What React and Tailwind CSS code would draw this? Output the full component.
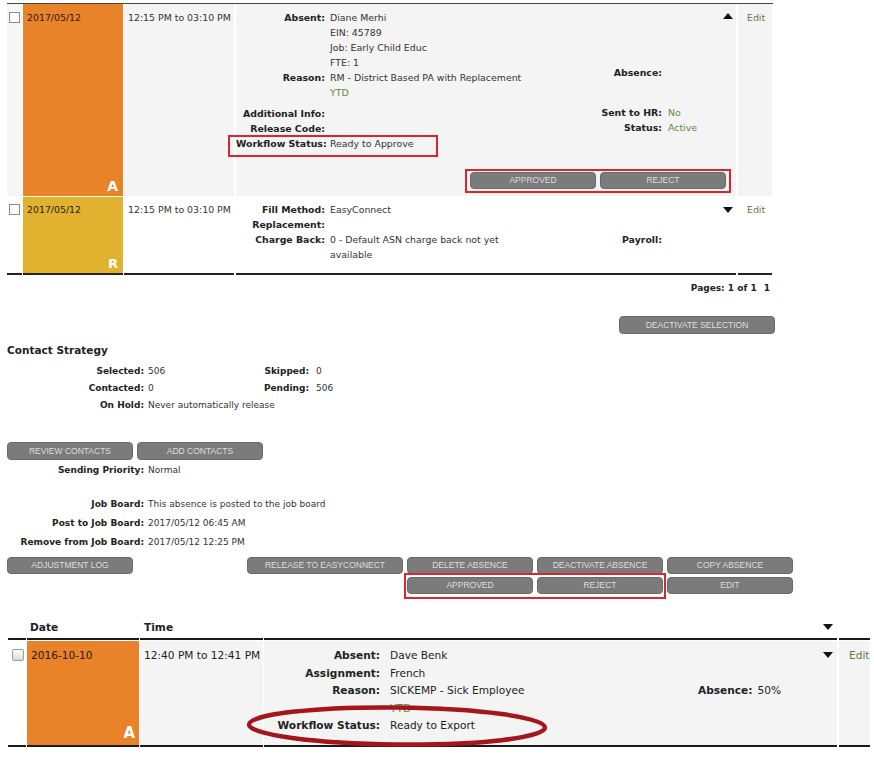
import React from 'react'

const font = "font-['DejaVu_Sans',Verdana,sans-serif]"
const btnBase =
  "flex items-center justify-center rounded-[4px] border border-[#6a6a6a] bg-[#7b7b7b] font-['Liberation_Sans',Arial,sans-serif] text-[8.5px] uppercase text-[#dedede]"

function Btn({ children, wide, tall }) {
  const w = wide ? 'w-[156px]' : 'w-[126px]'
  const h = tall ? 'h-[18px]' : 'h-[17px]'
  return <div className={`${btnBase} ${w} ${h}`}>{children}</div>
}

function Tri({ up }) {
  return (
    <svg width="10" height="6" viewBox="0 0 10 6" className="block">
      <polygon points={up ? '0,6 10,6 5,0' : '0,0 10,0 5,6'} fill="#111" />
    </svg>
  )
}

function Check({ old }) {
  return old ? (
    <div className="h-[12px] w-[12px] rounded-[2px] border border-[#9a9a9a] bg-gradient-to-b from-white to-[#d8d8d8]" />
  ) : (
    <div className="h-[11px] w-[11px] border border-[#8a8a8a] bg-white" />
  )
}

const lbl = 'text-right font-bold text-[#222]'
const green = 'text-[#5f8a3a]'

function TopTable() {
  return (
    <div className="ml-[7px] mt-[3px] w-[766px] border-t border-[#444] text-[9.4px] leading-[15px] text-[#333]">
      {/* row 1 */}
      <div className="flex h-[192px] bg-white">
        <div className="w-[15px] bg-[#f6f6f6] pl-[2px] pt-[8px]">
          <Check />
        </div>
        <div className="ml-[1px] flex w-[100px] flex-col justify-between bg-[#e8832a] pb-[3px] pl-[4px] pr-[5px] pt-[6px]">
          <span className="text-[#2b1a06]">2017/05/12</span>
          <span className="self-end text-[14px] font-bold leading-none text-white">A</span>
        </div>
        <div className="ml-[1px] w-[110px] bg-[#f4f4f4] pl-[4px] pt-[6px]">12:15 PM to 03:10 PM</div>
        <div className="ml-[2px] flex w-[500px] flex-col bg-[#f4f4f4]">
          <div className="flex">
            <div className="w-[365px] pt-[6px]">
              <div className="grid grid-cols-[89px_1fr] gap-x-[5px]">
                <span className={lbl}>Absent:</span>
                <span>Diane Merhi</span>
                <span />
                <span>EIN: 45789</span>
                <span />
                <span>Job: Early Child Educ</span>
                <span />
                <span>FTE: 1</span>
                <span className={lbl}>Reason:</span>
                <span className="whitespace-nowrap">RM - District Based PA with Replacement</span>
                <span />
                <span className={green}>YTD</span>
              </div>
              <div className="mt-[6px] grid grid-cols-[89px_1fr] gap-x-[5px]">
                <span className={`${lbl} whitespace-nowrap`}>Additional Info:</span>
                <span />
                <span className={`${lbl} whitespace-nowrap`}>Release Code:</span>
                <span />
                <span className={`${lbl} relative whitespace-nowrap`}>
                  <span className="absolute -left-[8px] -top-[1px] h-[22px] w-[210px] border-2 border-[#d9262e]" />
                  Workflow Status:
                </span>
                <span>Ready to Approve</span>
              </div>
            </div>
            <div className="flex-1 pt-[61px]">
              <div className="grid grid-cols-[61px_1fr] gap-x-[6px]">
                <span className={lbl}>Absence:</span>
                <span />
              </div>
              <div className="mt-[25px] grid grid-cols-[61px_1fr] gap-x-[6px]">
                <span className={`${lbl} whitespace-nowrap`}>Sent to HR:</span>
                <span className={green}>No</span>
                <span className={lbl}>Status:</span>
                <span className={green}>Active</span>
              </div>
            </div>
            <div className="w-[16px] pl-[3px] pt-[9px]">
              <Tri up />
            </div>
          </div>
          <div className="mb-[3px] mr-[5px] mt-auto flex gap-[4px] self-end border-2 border-[#d9262e] px-[3px] py-[1px] pb-[2px]">
            <Btn>Approved</Btn>
            <Btn>Reject</Btn>
          </div>
        </div>
        <div className="ml-[2px] w-[34px] bg-[#f4f4f4] pl-[9px] pt-[6px] text-[#5d7d3d]">Edit</div>
      </div>
      {/* row 2 */}
      <div className="mt-[1px] flex h-[78px] bg-white">
        <div className="w-[15px] border-b-2 border-[#222] pl-[2px] pt-[7px]">
          <Check />
        </div>
        <div className="ml-[1px] flex w-[100px] flex-col justify-between border-b-2 border-[#222] bg-[#e0b22e] pb-[3px] pl-[4px] pr-[5px] pt-[5px]">
          <span className="text-[#2b1a06]">2017/05/12</span>
          <span className="self-end text-[13px] font-bold leading-none text-white">R</span>
        </div>
        <div className="ml-[1px] w-[110px] border-b-2 border-[#222] pl-[4px] pt-[5px]">12:15 PM to 03:10 PM</div>
        <div className="ml-[2px] flex w-[500px] border-b-2 border-[#222]">
          <div className="w-[365px] pt-[5px]">
            <div className="grid grid-cols-[89px_1fr] gap-x-[5px]">
              <span className={`${lbl} whitespace-nowrap`}>Fill Method:</span>
              <span>EasyConnect</span>
              <span className={lbl}>Replacement:</span>
              <span />
              <span className={`${lbl} whitespace-nowrap`}>Charge Back:</span>
              <span className="w-[205px]">0 - Default ASN charge back not yet available</span>
            </div>
          </div>
          <div className="flex-1 pt-[35px]">
            <div className="grid grid-cols-[61px_1fr] gap-x-[6px]">
              <span className={lbl}>Payroll:</span>
              <span />
            </div>
          </div>
          <div className="w-[16px] pl-[3px] pt-[10px]">
            <Tri />
          </div>
        </div>
        <div className="ml-[2px] w-[34px] border-b-2 border-[#222] pl-[9px] pt-[5px] text-[#5d7d3d]">Edit</div>
      </div>
    </div>
  )
}

function ContactArea() {
  return (
    <div className="text-[9px] text-[#333]">
      <div className="ml-[7px] mt-[6px] w-[766px] pr-[3px] text-right font-bold leading-[15px] text-[#222]">
        Pages: 1 of 1<span className="ml-[7px]">1</span>
      </div>
      <div className="ml-[619px] mt-[20px]">
        <Btn wide tall>
          <span className="w-[157px] text-center">Deactivate Selection</span>
        </Btn>
      </div>
      <div className="ml-[7px] mt-[10px] text-[10.5px] font-bold leading-[13px] text-[#222]">Contact Strategy</div>
      <div className="ml-[7px] mt-[6px] leading-[17px]">
        <div className="flex">
          <span className={`${lbl} w-[137px]`}>Selected:</span>
          <span className="ml-[4px] w-[114px]">506</span>
          <span className={`${lbl} w-[47px]`}>Skipped:</span>
          <span className="ml-[7px]">0</span>
        </div>
        <div className="flex">
          <span className={`${lbl} w-[137px]`}>Contacted:</span>
          <span className="ml-[4px] w-[114px]">0</span>
          <span className={`${lbl} w-[47px]`}>Pending:</span>
          <span className="ml-[7px]">506</span>
        </div>
        <div className="flex">
          <span className={`${lbl} w-[137px]`}>On Hold:</span>
          <span className="ml-[4px]">Never automatically release</span>
        </div>
      </div>
      <div className="ml-[7px] mt-[28px] flex gap-[4px]">
        <Btn tall>Review Contacts</Btn>
        <Btn tall>Add Contacts</Btn>
      </div>
      <div className="ml-[7px] mt-[3px] flex leading-[15px]">
        <span className={`${lbl} w-[137px]`}>Sending Priority:</span>
        <span className="ml-[4px]">Normal</span>
      </div>
      <div className="ml-[7px] mt-[17px] leading-[19px]">
        <div className="flex">
          <span className={`${lbl} w-[137px] whitespace-nowrap`}>Job Board:</span>
          <span className="ml-[4px]">This absence is posted to the job board</span>
        </div>
        <div className="flex">
          <span className={`${lbl} w-[137px] whitespace-nowrap`}>Post to Job Board:</span>
          <span className="ml-[4px]">2017/05/12 06:45 AM</span>
        </div>
        <div className="flex">
          <span className={`${lbl} w-[137px] whitespace-nowrap`}>Remove from Job Board:</span>
          <span className="ml-[4px]">2017/05/12 12:25 PM</span>
        </div>
      </div>
      <div className="ml-[7px] mt-[5px] flex">
        <Btn>Adjustment Log</Btn>
        <div className="ml-[114px] flex gap-[4px]">
          <Btn wide>Release to EasyConnect</Btn>
          <Btn>Delete Absence</Btn>
          <Btn>Deactivate Absence</Btn>
          <Btn>Copy Absence</Btn>
        </div>
      </div>
      <div className="relative ml-[407px] mt-[3px] flex gap-[4px]">
        <span className="absolute -left-[3px] -top-[4px] h-[26px] w-[262px] border-2 border-[#d9262e]" />
        <Btn>Approved</Btn>
        <Btn>Reject</Btn>
        <Btn>Edit</Btn>
      </div>
    </div>
  )
}

function BottomTable() {
  const hd = 'border-b-2 border-[#1a1a1a]'
  return (
    <div className="ml-[8px] mt-[20px] w-[862px] text-[10.6px] text-[#222]">
      <div className="flex h-[26px] bg-white font-bold leading-[14px]">
        <div className={`w-[18px] ${hd}`} />
        <div className={`ml-[1px] w-[112px] pl-[3px] pt-[6px] ${hd}`}>Date</div>
        <div className={`ml-[1px] w-[123px] pl-[4px] pt-[6px] ${hd}`}>Time</div>
        <div className={`ml-[1px] flex w-[573px] justify-end pr-[4px] pt-[10px] ${hd}`}>
          <Tri />
        </div>
        <div className={`ml-[2px] w-[31px] ${hd}`} />
      </div>
      <div className="relative mt-[1px] flex h-[106px] bg-white">
        <div className={`w-[18px] pl-[4px] pt-[8px] ${hd}`}>
          <Check old />
        </div>
        <div className={`ml-[1px] flex w-[112px] flex-col justify-between bg-[#e8832a] pb-[4px] pl-[4px] pr-[4px] pt-[6px] ${hd}`}>
          <span className="leading-[17.5px] text-[#2b1a06]">2016-10-10</span>
          <span className="self-end text-[15px] font-bold leading-none text-white">A</span>
        </div>
        <div className={`ml-[1px] w-[123px] bg-[#f4f4f4] pl-[4px] pt-[6px] leading-[17.5px] ${hd}`}>
          12:40 PM to 12:41 PM
        </div>
        <div className={`ml-[1px] flex w-[573px] bg-[#f4f4f4] pt-[6px] leading-[17.5px] ${hd}`}>
          <div className="grid w-[434px] grid-cols-[116px_1fr] content-start gap-x-[10px]">
            <span className={lbl}>Absent:</span>
            <span>Dave Benk</span>
            <span className={lbl}>Assignment:</span>
            <span>French</span>
            <span className={lbl}>Reason:</span>
            <span>SICKEMP - Sick Employee</span>
            <span />
            <span className={green}>YTD</span>
            <span className={`${lbl} whitespace-nowrap`}>Workflow Status:</span>
            <span>Ready to Export</span>
          </div>
          <div className="flex-1 pt-[35px]">
            <span className="font-bold">Absence:</span>
            <span className="ml-[5px]">50%</span>
          </div>
          <div className="w-[14px] pt-[5px]">
            <Tri />
          </div>
        </div>
        <div className={`ml-[2px] w-[31px] bg-[#f4f4f4] pl-[10px] pt-[6px] leading-[17.5px] text-[#5d7d3d] ${hd}`}>
          Edit
        </div>
        <svg
          className="pointer-events-none absolute left-[234px] top-[60px]"
          width="312"
          height="50"
          viewBox="0 0 312 50"
        >
          <ellipse cx="155" cy="25" rx="148" ry="18.5" fill="none" stroke="#a3161b" strokeWidth="4.5" transform="rotate(0.6 155 25)" />
        </svg>
      </div>
    </div>
  )
}

export default function App() {
  return (
    <div className={`relative h-[757px] w-[874px] overflow-hidden bg-white ${font}`}>
      <TopTable />
      <ContactArea />
      <BottomTable />
    </div>
  )
}
